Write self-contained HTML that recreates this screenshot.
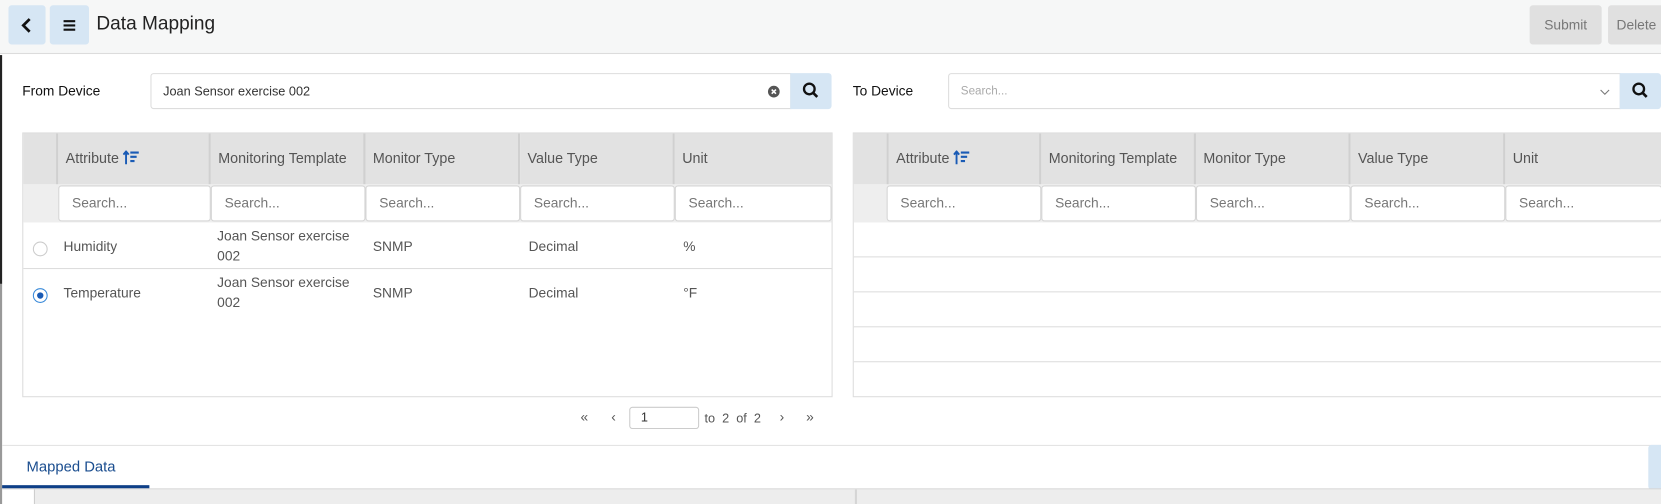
<!DOCTYPE html>
<html><head><style>
*{box-sizing:border-box;margin:0;padding:0}
body{width:1661px;height:504px;overflow:hidden;background:#fff;font-family:"Liberation Sans",sans-serif;font-size:13px;color:#555;position:relative}
#root{position:absolute;left:0;top:0;width:1568px;height:476px;transform:scale(1.05931);transform-origin:0 0;overflow:hidden}
.a{position:absolute}
.hdr{left:0;top:0;width:1568px;height:51px;background:#f6f7f7;border-bottom:1px solid #dcdcdc}
.btn{background:#d6e6f4;border-radius:3px;top:5px;height:37px;width:35px}
.gb{background:#e0e0e0;border-radius:3px;top:5px;height:37px;color:#777;font-size:13px;line-height:37px;text-align:center}
.inp{border:1px solid #ddd;border-radius:3px 0 0 3px;background:#fff;height:34px;top:69px;font-size:12px;line-height:32px;padding-left:11px}
.sb{background:#d6e6f4;border-radius:0 3px 3px 0;top:69px;height:34px;width:39px}
.tbl{top:125px;height:250px;border:1px solid #ddd}
.th{background:#e2e2e2;height:48px;top:0;border-right:2px solid #d0d0d0;line-height:48px;padding-left:7px;font-size:13.5px;color:#555}
.fr{top:48px;height:36px;background:#eee;left:0;right:0}
.fi{position:absolute;top:1px;height:34px;background:#fff;border:1px solid #d5d5d5;border-radius:3px;padding-left:12px;line-height:32px;color:#777;font-size:13px}
.row{left:0;right:0;border-bottom:1px solid #ddd}
.cell{position:absolute;font-size:13px;color:#555;line-height:19px}
</style></head><body><div id="root">
<div class="a hdr"></div>
<div class="a" style="left:0;top:52px;width:2px;height:216px;background:#222"></div>
<div class="a" style="left:0;top:268px;width:2px;height:208px;background:#999"></div>
<div class="a btn" style="left:8px"><svg width="35" height="37"><path d="M20 13l-6 6 6 6" stroke="#111" stroke-width="2.6" fill="none"/></svg></div>
<div class="a btn" style="left:47px;width:37px"><svg width="37" height="37"><path d="M13 15h11M13 19h11M13 23h11" stroke="#111" stroke-width="2"/></svg></div>
<div class="a" style="left:91px;top:12px;font-size:18px;color:#222">Data Mapping</div>
<div class="a gb" style="left:1444px;width:68px">Submit</div>
<div class="a gb" style="left:1518px;width:60px;border-radius:3px 0 0 3px;padding-left:8px;text-align:left">Delete</div>

<div class="a" style="left:21px;top:78px;color:#111;font-size:13px">From Device</div>
<div class="a inp" style="left:142px;width:605px;color:#333">Joan Sensor exercise 002</div>
<svg class="a" style="left:724px;top:80px" width="13" height="13"><circle cx="6.5" cy="6.5" r="5.5" fill="#555"/><path d="M4.5 4.5l4 4M8.5 4.5l-4 4" stroke="#fff" stroke-width="1.5"/></svg>
<div class="a sb" style="left:746px"><svg width="39" height="34"><circle cx="18" cy="15" r="5" stroke="#111" stroke-width="2.2" fill="none"/><path d="M21.5 18.5l4 4" stroke="#111" stroke-width="2.5"/></svg></div>

<div class="a" style="left:805px;top:78px;color:#111;font-size:13px">To Device</div>
<div class="a inp" style="left:895px;width:635px;color:#aaa;font-size:11px">Search...</div>
<svg class="a" style="left:1510px;top:83px" width="10" height="8"><path d="M1 2l4 4 4-4" stroke="#777" fill="none"/></svg>
<div class="a sb" style="left:1529px"><svg width="39" height="34"><circle cx="18" cy="15" r="5" stroke="#111" stroke-width="2.2" fill="none"/><path d="M21.5 18.5l4 4" stroke="#111" stroke-width="2.5"/></svg></div>

<div class="a tbl" style="left:21px;width:765px">
 <div class="a th" style="left:0;width:33px"></div>
 <div class="a th" style="left:33px;width:144px">Attribute <svg width="16" height="14" style="vertical-align:-2px"><path d="M3 1v12M0.5 4L3 1l2.5 3" stroke="#1a5bb5" stroke-width="1.8" fill="none"/><path d="M7 2h8M7 6h6M7 10h4" stroke="#1a5bb5" stroke-width="2"/></svg></div>
 <div class="a th" style="left:177px;width:146px">Monitoring Template</div>
 <div class="a th" style="left:323px;width:146px">Monitor Type</div>
 <div class="a th" style="left:469px;width:146px">Value Type</div>
 <div class="a th" style="left:615px;width:148px;border-right:none">Unit</div>
 <div class="a fr"><div class="fi" style="left:33px;width:144px">Search...</div><div class="fi" style="left:177px;width:146px">Search...</div><div class="fi" style="left:323px;width:146px">Search...</div><div class="fi" style="left:469px;width:146px">Search...</div><div class="fi" style="left:615px;width:148px">Search...</div></div>
 <div class="a row" style="top:84px;height:44px">
  <div class="a" style="left:9px;top:18px;width:14px;height:14px;border:1px solid #ccc;border-radius:50%"></div>
  <div class="cell" style="left:38px;top:13px">Humidity</div>
  <div class="cell" style="left:183px;top:3px">Joan Sensor exercise<br>002</div>
  <div class="cell" style="left:330px;top:13px">SNMP</div>
  <div class="cell" style="left:477px;top:13px">Decimal</div>
  <div class="cell" style="left:623px;top:13px">%</div>
 </div>
 <div class="a" style="left:0;right:0;top:128px;height:44px">
  <div class="a" style="left:9px;top:18px;width:14px;height:14px;border:1px solid #3a8ad9;border-radius:50%"><div class="a" style="left:3px;top:3px;width:6px;height:6px;background:#1a5bb5;border-radius:50%"></div></div>
  <div class="cell" style="left:38px;top:13px">Temperature</div>
  <div class="cell" style="left:183px;top:3px">Joan Sensor exercise<br>002</div>
  <div class="cell" style="left:330px;top:13px">SNMP</div>
  <div class="cell" style="left:477px;top:13px">Decimal</div>
  <div class="cell" style="left:623px;top:13px">°F</div>
 </div>
</div>

<div class="a tbl" style="left:805px;width:780px">
 <div class="a th" style="left:0;width:33px"></div>
 <div class="a th" style="left:33px;width:144px">Attribute <svg width="16" height="14" style="vertical-align:-2px"><path d="M3 1v12M0.5 4L3 1l2.5 3" stroke="#1a5bb5" stroke-width="1.8" fill="none"/><path d="M7 2h8M7 6h6M7 10h4" stroke="#1a5bb5" stroke-width="2"/></svg></div>
 <div class="a th" style="left:177px;width:146px">Monitoring Template</div>
 <div class="a th" style="left:323px;width:146px">Monitor Type</div>
 <div class="a th" style="left:469px;width:146px">Value Type</div>
 <div class="a th" style="left:615px;width:165px">Unit</div>
 <div class="a fr"><div class="fi" style="left:31px;width:146px">Search...</div><div class="fi" style="left:177px;width:146px">Search...</div><div class="fi" style="left:323px;width:146px">Search...</div><div class="fi" style="left:469px;width:146px">Search...</div><div class="fi" style="left:615px;width:148px">Search...</div></div>
 <div class="a row" style="top:84px;height:33px"></div>
 <div class="a row" style="top:117px;height:33px"></div>
 <div class="a row" style="top:150px;height:33px"></div>
 <div class="a row" style="top:183px;height:33px"></div>
</div>

<div class="a" style="left:548px;top:386px;font-size:13px;color:#555">«</div>
<div class="a" style="left:577px;top:386px;font-size:13px;color:#555">‹</div>
<div class="a" style="left:594px;top:384px;width:66px;height:21px;border:1px solid #ccc;border-radius:3px;padding-left:10px;line-height:19px;color:#333;font-size:12px">1</div>
<div class="a" style="left:665px;top:388px;font-size:12px;color:#555">to&nbsp; 2&nbsp; of&nbsp; 2</div>
<div class="a" style="left:736px;top:386px;font-size:13px;color:#555">›</div>
<div class="a" style="left:761px;top:386px;font-size:13px;color:#555">»</div>

<div class="a" style="left:2px;top:420px;width:1566px;height:1px;background:#e3e3e3"></div>
<div class="a" style="left:25px;top:432px;font-size:14px;color:#1a4d8f">Mapped Data</div>
<div class="a" style="left:2px;top:458px;width:139px;height:3px;background:#0e3f87"></div>
<div class="a" style="left:1556px;top:420px;width:12px;height:42px;background:#d6e6f4;border-radius:3px 0 0 3px"></div>
<div class="a" style="left:2px;top:461px;width:1566px;height:1px;background:#d5d5d5"></div>
<div class="a" style="left:33px;top:462px;width:1535px;height:14px;background:#ededed"></div>
<div class="a" style="left:807px;top:462px;width:2px;height:14px;background:#d5d5d5"></div>
<div class="a" style="left:32px;top:462px;width:1px;height:14px;background:#ccc"></div>
</div></body></html>
